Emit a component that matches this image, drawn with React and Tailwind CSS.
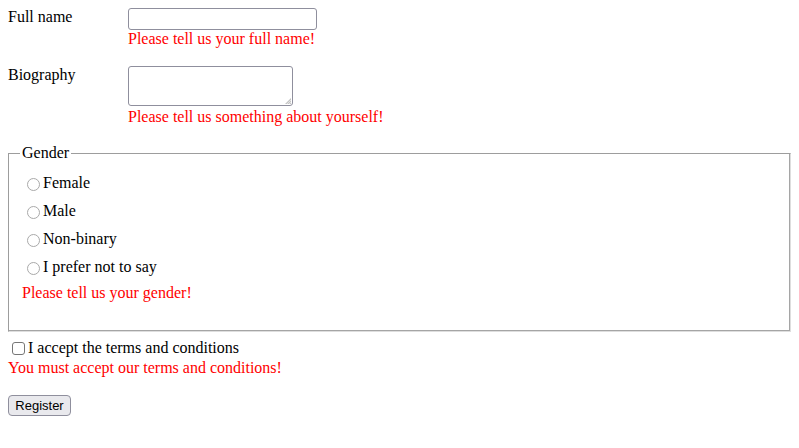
export default function App() {
  const options = ["Female", "Male", "Non-binary", "I prefer not to say"];
  return (
    <div className="bg-white min-h-[448px] px-[8px] pt-[8px] font-['Liberation_Serif',serif] text-[16px] leading-[18px] text-black">
      <div className="flex">
        <label className="w-[120px] shrink-0">Full name</label>
        <div>
          <input
            type="text"
            className="block w-[189px] h-[22px] border border-[#8f8f9d] rounded-[3px] bg-white px-[2px] text-[13px] outline-none"
          />
          <div className="text-[#ff0000]">Please tell us your full name!</div>
        </div>
      </div>
      <div className="flex mt-[18px]">
        <label className="w-[120px] shrink-0">Biography</label>
        <div>
          <div className="relative w-[165px] h-[40px]">
            <textarea className="block w-[165px] h-[40px] resize-none border border-[#8f8f9d] rounded-[3px] bg-white p-[2px] text-[13px] outline-none" />
            <svg className="absolute right-[2px] bottom-[2px] pointer-events-none" width="6" height="6" viewBox="0 0 6 6">
              <path d="M6 0 L6 6 L0 6 Z" fill="#c4c4c4" />
              <path d="M6 2 L2 6 M6 4 L4 6" stroke="#e8e8e8" strokeWidth="0.8" />
            </svg>
          </div>
          <div className="mt-[2px] text-[#ff0000]">Please tell us something about yourself!</div>
        </div>
      </div>
      <fieldset className="mt-[18px] border border-t-[#9d9d9d] border-l-[#9d9d9d] border-r-[#dedede] border-b-[#dedede] shadow-[inset_-1px_-1px_0_#a5a5a5] px-[13px] pt-[7px] pb-[11px]">
        <legend className="leading-[18px] -ml-[2px] px-[2px]">Gender</legend>
        {options.map((o) => (
          <div key={o} className="flex items-center py-[5px] h-[28px]">
            <span className="ml-[5px] mr-[3px] w-[13px] h-[13px] mt-[2px] rounded-full border border-[#a9a9a9] bg-white shrink-0" />
            <span>{o}</span>
          </div>
        ))}
        <div className="mt-[3px] mb-[18px] text-[#ff0000]">Please tell us your gender!</div>
      </fieldset>
      <div className="flex items-center mt-[7px] h-[18px]">
        <span className="ml-[4px] mr-[3px] w-[13px] h-[13px] mt-[1px] rounded-[3px] border border-[#767676] bg-white shrink-0" />
        <span>I accept the terms and conditions</span>
      </div>
      <div className="mt-[2px] text-[#ff0000]">You must accept our terms and conditions!</div>
      <button className="mt-[18px] block w-[63px] h-[21px] border border-[#8f8f9d] rounded-[4px] bg-[#e9e9ed] font-['Liberation_Sans',sans-serif] text-[13px] leading-[15px] text-black">
        Register
      </button>
    </div>
  );
}
